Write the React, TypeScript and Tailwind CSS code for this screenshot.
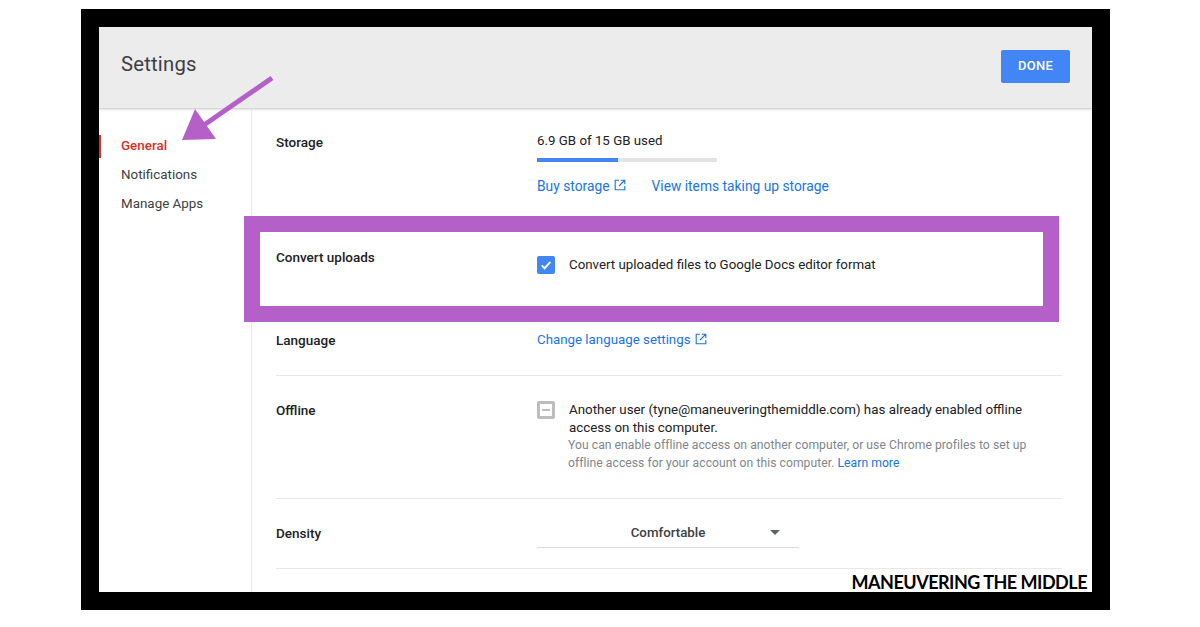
const SIDE_ITEMS = ["General", "Notifications", "Manage Apps"];

function ExternalIcon() {
  return (
    <svg width="12" height="12" viewBox="0 0 12 12" fill="none" stroke="#1a73e8" strokeWidth="1.1" className="mb-[3px]">
      <path d="M5 1.2H1.2v9.6h9.6V7" />
      <path d="M6.8 1.2h4v4M10.6 1.4 5 7" />
    </svg>
  );
}

export default function App() {
  return (
    <div className="h-[627px] w-[1200px] bg-white pl-[81px] pr-[90px] pt-[9px] font-['Roboto',sans-serif] overflow-hidden">
      <div className="relative flex h-[601px] w-[1029px] flex-col overflow-hidden border-x-[18px] border-t-[18px] border-b-[18px] border-black bg-white">
        {/* Header */}
        <div className="flex h-[82px] shrink-0 items-center justify-between border-b border-[#d6d6d6] bg-[#ececec] pl-[22px] pr-[22px] shadow-[0_1px_2px_rgba(0,0,0,0.12)]">
          <h1 className="mt-[-6px] text-[20.3px] font-normal leading-none tracking-[0.2px] text-[#3c4043]">Settings</h1>
          <button type="button" className="mt-[-3px] flex h-[33px] w-[69px] items-center justify-center rounded-[2px] bg-[#4285f4] text-[13px] font-medium tracking-[0.3px] text-white">
            DONE
          </button>
        </div>

        <div className="flex min-h-0 flex-1">
          {/* Sidebar */}
          <div className="w-[153px] shrink-0 border-r border-[#e8e8e8] pt-[23px]">
            {SIDE_ITEMS.map((item, idx) => (
              <div
                key={item}
                className={`flex h-[29px] items-center text-[13.4px] ${
                  idx === 0 ? "font-medium text-[#d93025]" : "text-[#3c4043]"
                }`}
              >
                <div className={`h-[23px] w-[2px] ${idx === 0 ? "bg-[#d93025]" : ""}`} />
                <span className="ml-[20px]">{item}</span>
              </div>
            ))}
          </div>

          {/* Rows */}
          <div className="min-w-0 flex-1 pl-[24px] pr-[30px]">
            <div className="flex h-[107px] pt-[23px]">
              <div className="w-[261px] shrink-0 text-[13.5px] font-medium leading-[20px] text-[#202124]">Storage</div>
              <div className="-mt-[1px]">
                <div className="text-[13.3px] leading-[20px] text-[#202124]">6.9 GB of 15 GB used</div>
                <div className="mt-[7px] h-[4px] w-[180px] bg-[#e3e3e3]">
                  <div className="h-full w-[81px] bg-[#4285f4]" />
                </div>
                <div className="mt-[14px] flex items-center text-[13.8px] leading-[20px] text-[#1a73e8]">
                  <span className="mr-[4px]">Buy storage</span>
                  <ExternalIcon />
                  <span className="ml-[26px]">View items taking up storage</span>
                </div>
              </div>
            </div>

            <div className="relative flex h-[106px] pt-[31px]">
              <div className="absolute left-[-32px] top-0 h-[106px] w-[815px] border-[16px] border-[#b460c8]" />
              <div className="w-[261px] shrink-0 text-[13.5px] font-medium leading-[20px] text-[#202124]">Convert uploads</div>
              <div className="flex items-center self-start pt-[8px]">
                <div className="flex h-[18px] w-[18px] items-center justify-center rounded-[2px] bg-[#4285f4]">
                  <svg width="14" height="14" viewBox="0 0 13 13" fill="none" stroke="white" strokeWidth="1.8">
                    <path d="M2.5 6.8 5.2 9.5 10.6 3.6" />
                  </svg>
                </div>
                <span className="ml-[14px] text-[13.3px] leading-[20px] text-[#202124]">Convert uploaded files to Google Docs editor format</span>
              </div>
            </div>

            <div className="flex h-[54px] border-b border-[#e8e8e8] pt-[8px]">
              <div className="w-[261px] shrink-0 text-[13.5px] font-medium leading-[20px] text-[#202124]">Language</div>
              <div className="flex items-center self-start text-[13.3px] leading-[20px] text-[#1a73e8]">
                <span className="mr-[4px]">Change language settings</span>
                <ExternalIcon />
              </div>
            </div>

            <div className="flex h-[123px] border-b border-[#e8e8e8] pt-[24px]">
              <div className="w-[261px] shrink-0 text-[13.5px] font-medium leading-[20px] text-[#202124]">Offline</div>
              <div className="flex">
                <div className="mt-[1px] flex h-[18px] w-[18px] shrink-0 items-center justify-center rounded-[2px] border-[3px] border-[#bdbdbd]">
                  <div className="h-[2px] w-[8px] bg-[#bdbdbd]" />
                </div>
                <div className="ml-[14px] w-[470px] pt-[1px]">
                  <div className="text-[13.35px] leading-[18px] text-[#202124]">
                    Another user (tyne@maneuveringthemiddle.com) has already enabled offline access on this computer.
                  </div>
                  <div className="-ml-[1px] -mt-[1px] text-[12.15px] leading-[18px] tracking-[0.05px] text-[#80868b]">
                    You can enable offline access on another computer, or use Chrome profiles to set up offline access for your account on this computer.{" "}
                    <span className="text-[#1a73e8]">Learn more</span>
                  </div>
                </div>
              </div>
            </div>

            <div className="flex h-[70px] border-b border-[#e8e8e8] pt-[24px]">
              <div className="w-[261px] shrink-0 text-[13.5px] font-medium leading-[20px] text-[#202124]">Density</div>
              <div className="relative flex h-[25px] w-[262px] items-start justify-center border-b border-[#dadce0] text-[13.3px] font-medium leading-[20px] text-[#3c4043]">
                Comfortable
                <div className="absolute right-[19px] top-[7px] h-0 w-0 border-x-[5px] border-t-[5px] border-x-transparent border-t-[#5f6368]" />
              </div>
            </div>
          </div>
        </div>

        {/* Arrow annotation */}
        <svg className="absolute left-0 top-0" width="300" height="200" viewBox="0 0 300 200" fill="#b460c8">
          <path d="M173 51 105 98" stroke="#b460c8" strokeWidth="5" />
          <polygon points="96,82 83,113 117,112" />
        </svg>

        {/* Watermark */}
        <div className="absolute bottom-[-1px] right-[5px] bg-white pl-[2px] font-['Lato',sans-serif] text-[18px] font-bold leading-[22px] tracking-[-0.5px] text-black">
          MANEUVERING THE MIDDLE
        </div>
      </div>
    </div>
  );
}
